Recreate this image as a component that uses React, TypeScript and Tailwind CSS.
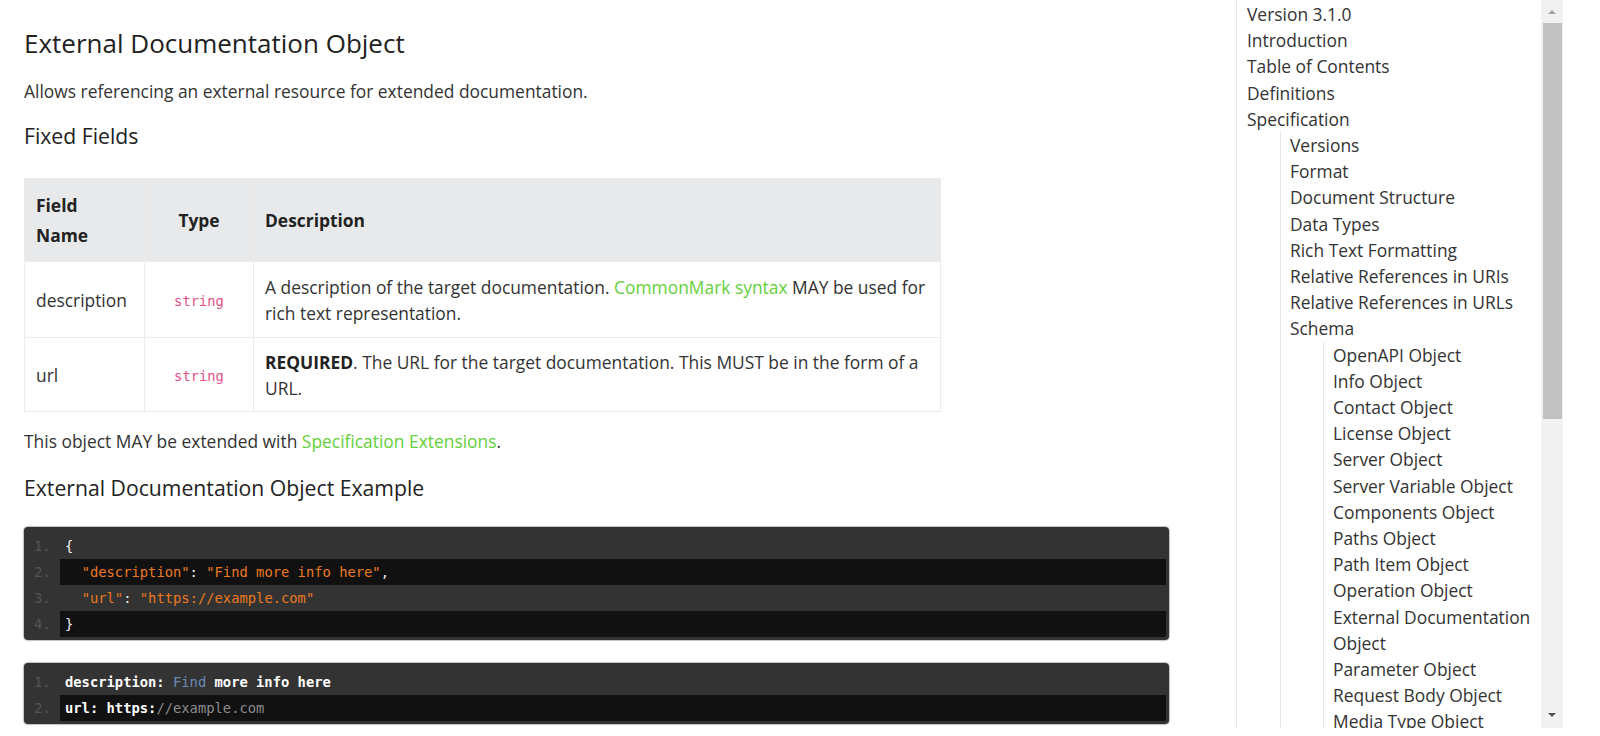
import React from "react";

const SANS = "font-['Open_Sans',sans-serif]";

type Item = { t: string; c?: Item[] };

const level3: Item[] = [
  "OpenAPI Object",
  "Info Object",
  "Contact Object",
  "License Object",
  "Server Object",
  "Server Variable Object",
  "Components Object",
  "Paths Object",
  "Path Item Object",
  "Operation Object",
  "External Documentation Object",
  "Parameter Object",
  "Request Body Object",
  "Media Type Object",
  "Encoding Object",
  "Responses Object",
].map((t) => ({ t }));

const level2: Item[] = [
  { t: "Versions" },
  { t: "Format" },
  { t: "Document Structure" },
  { t: "Data Types" },
  { t: "Rich Text Formatting" },
  { t: "Relative References in URIs" },
  { t: "Relative References in URLs" },
  { t: "Schema", c: level3 },
];

const toc: Item[] = [
  { t: "Version 3.1.0" },
  { t: "Introduction" },
  { t: "Table of Contents" },
  { t: "Definitions" },
  { t: "Specification", c: level2 },
];

function TocList({ items, nested }: { items: Item[]; nested?: boolean }) {
  return (
    <ul
      className={
        nested
          ? "ml-[33px] border-l border-[#e6e6e6] pl-[9px]"
          : "border-l border-[#e6e6e6] pl-[10px] pt-[1px]"
      }
    >
      {items.map((it) => (
        <li key={it.t}>
          <span className="block leading-[26.2px] text-[#333]">{it.t}</span>
          {it.c && <TocList items={it.c} nested />}
        </li>
      ))}
    </ul>
  );
}

function Scrollbar() {
  return (
    <div className="flex w-[22px] shrink-0 flex-col bg-[#f1f1f1]">
      <div className="flex h-[23px] items-center justify-center">
        <div className="h-0 w-0 border-x-[4px] border-b-[4px] border-x-transparent border-b-[#a3a3a3]" />
      </div>
      <div className="ml-[2px] mr-[1px] h-[396px] bg-[#c1c1c1]" />
      <div className="flex-1" />
      <div className="flex h-[26px] items-center justify-center">
        <div className="h-0 w-0 border-x-[4px] border-t-[4px] border-x-transparent border-t-[#505050]" />
      </div>
    </div>
  );
}

type Tok = { s: string; c: string };

function CodeBlock({ lines }: { lines: Tok[][] }) {
  return (
    <div className="overflow-hidden rounded-[4px] bg-[#333] pb-[3px] pt-[6px] shadow-[0_0_1px_1px_rgba(0,0,0,0.25)] font-['DejaVu_Sans_Mono',monospace] text-[13.8px]">
      {lines.map((toks, i) => (
        <div key={i} className="flex leading-[26px]">
          <div className="w-[36px] shrink-0 pl-[10px] text-[#555]">{i + 1}.</div>
          <div
            className={
              "mr-[3px] flex-1 whitespace-pre pl-[5px] " + (i % 2 === 1 ? "bg-[#111]" : "")
            }
          >
            {toks.map((t, j) => (
              <span key={j} className={t.c}>
                {t.s}
              </span>
            ))}
          </div>
        </div>
      ))}
    </div>
  );
}

const W = "text-[#f0f0f0]";
const O = "text-[#eb7a1f]";
const B = "text-[#6d89b8]";
const G = "text-[#8c8c8c]";
const WB = "text-white font-bold";

const jsonLines: Tok[][] = [
  [{ s: "{", c: W }],
  [
    { s: "  ", c: W },
    { s: '"description"', c: O },
    { s: ": ", c: W },
    { s: '"Find more info here"', c: O },
    { s: ",", c: W },
  ],
  [
    { s: "  ", c: W },
    { s: '"url"', c: O },
    { s: ": ", c: W },
    { s: '"https://example.com"', c: O },
  ],
  [{ s: "}", c: W }],
];

const yamlLines: Tok[][] = [
  [
    { s: "description: ", c: WB },
    { s: "Find", c: B },
    { s: " more info here", c: WB },
  ],
  [
    { s: "url: https:", c: WB },
    { s: "//example.com", c: G },
  ],
];

const LINK = "text-[#66cf3c]";
const CODE = "font-['DejaVu_Sans_Mono',monospace] text-[13.8px] text-[#e4508a]";
const TD = "border border-[#ececec] px-[11px]";

export default function App() {
  return (
    <div className={`${SANS} flex h-[736px] w-[1600px] overflow-hidden bg-white text-[17.4px] text-[#333]`}>
      <main className="ml-[24px] w-[1145px] shrink-0 pt-[27px]">
        <h2 className="text-[26px] leading-[32px] text-[#222]">External Documentation Object</h2>
        <p className="mt-[19px] leading-[26px]">
          Allows referencing an external resource for extended documentation.
        </p>
        <h3 className="mt-[18px] text-[21.2px] leading-[28px] text-[#222]">Fixed Fields</h3>
        <table className="mt-[28px] w-[916px] table-fixed border-collapse">
          <colgroup>
            <col className="w-[120px]" />
            <col className="w-[109px]" />
            <col className="w-[687px]" />
          </colgroup>
          <thead>
            <tr className="bg-[#e8e9eb] text-[#222]">
              <th className={`${TD} py-[11px] text-left font-bold leading-[30px]`}>Field Name</th>
              <th className={`${TD} py-[11px] text-center font-bold leading-[30px]`}>Type</th>
              <th className={`${TD} py-[11px] text-left font-bold leading-[30px]`}>Description</th>
            </tr>
          </thead>
          <tbody className="leading-[26px]">
            <tr>
              <td className={`${TD} pb-[11px] pt-[12px]`}>description</td>
              <td className={`${TD} pb-[11px] pt-[12px] text-center`}>
                <code className={CODE}>string</code>
              </td>
              <td className={`${TD} pb-[11px] pt-[12px]`}>
                A description of the target documentation. <span className={LINK}>CommonMark syntax</span> MAY be
                used for rich text representation.
              </td>
            </tr>
            <tr>
              <td className={`${TD} pb-[10px] pt-[11px]`}>url</td>
              <td className={`${TD} pb-[10px] pt-[11px] text-center`}>
                <code className={CODE}>string</code>
              </td>
              <td className={`${TD} pb-[10px] pt-[11px]`}>
                <strong className="font-bold text-[#222]">REQUIRED</strong>. The URL for the target documentation.
                This MUST be in the form of a URL.
              </td>
            </tr>
          </tbody>
        </table>
        <p className="mt-[16px] leading-[26px]">
          This object MAY be extended with <span className={LINK}>Specification Extensions</span>.
        </p>
        <h3 className="mt-[20px] text-[21.2px] leading-[28px] text-[#222]">
          External Documentation Object Example
        </h3>
        <div className="mt-[25px]">
          <CodeBlock lines={jsonLines} />
        </div>
        <div className="mt-[23px]">
          <CodeBlock lines={yamlLines} />
        </div>
      </main>
      <aside className="ml-[67px] flex h-[728px] w-[327px] shrink-0 overflow-hidden">
        <nav className="min-w-0 flex-1 overflow-hidden">
          <TocList items={toc} />
        </nav>
        <Scrollbar />
      </aside>
    </div>
  );
}
